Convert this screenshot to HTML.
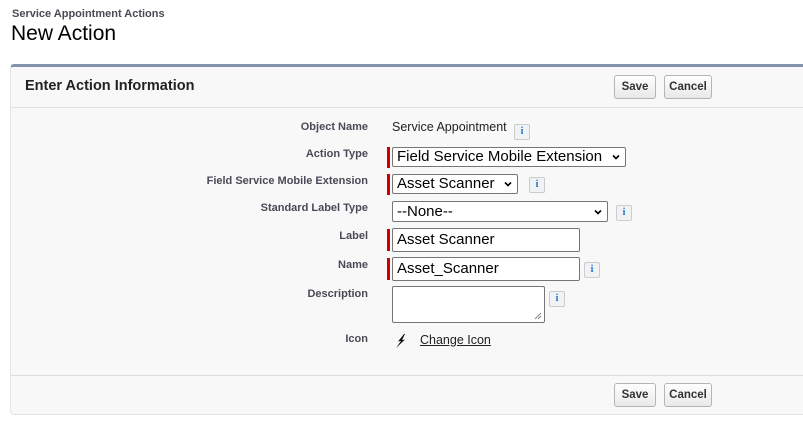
<!DOCTYPE html>
<html><head><style>
*{box-sizing:border-box;margin:0;padding:0}
body{width:803px;height:436px;background:#fff;font-family:"Liberation Sans",Arial,sans-serif;position:relative;overflow:hidden;color:#000}
.a{position:absolute}
.lbl{position:absolute;right:435px;font-size:11px;font-weight:bold;color:#4a4a56;text-align:right;white-space:nowrap}
.req{position:absolute;left:387px;width:3px;background:#c00}
.fld{position:absolute;left:392px;border:1px solid #767676;background:#fff;font-size:15px;color:#000;padding-left:4px;border-radius:2px;white-space:nowrap}
.info{position:absolute;width:16px;height:16px;border:1px solid #ccc;border-radius:2px;background:#f0f2f5;color:#1a73c8;font:bold 10px "Liberation Serif",serif;text-align:center;line-height:14px}
.btn{position:absolute;height:24px;border:1px solid #b5b5b5;border-radius:3px;background:linear-gradient(#fff,#e8e8e8);font-size:11.5px;font-weight:bold;color:#333;text-align:center;line-height:22px}
.chev{position:absolute;right:5px;top:5px;width:8px;height:8px}
</style></head><body>
<div class="a" style="left:12px;top:8px;font-size:11px;font-weight:bold;color:#4a4a56">Service Appointment Actions</div>
<div class="a" style="left:11px;top:22px;font-size:21px;color:#000">New Action</div>
<div class="a" style="left:10px;top:64px;width:800px;height:351px;background:#f8f8f8;border-top:3px solid #8493ab;border-left:1px solid #e4e4e4;border-bottom:1px solid #e0e0e0;border-radius:4px 0 0 4px"></div>
<div class="a" style="left:11px;top:107px;width:792px;height:1px;background:#e2e2e2"></div>
<div class="a" style="left:11px;top:375px;width:792px;height:1px;background:#dcdcdc"></div>
<div class="a" style="left:25px;top:78px;font-size:14.5px;font-weight:bold;color:#222">Enter Action Information</div>
<div class="btn" style="left:614px;top:75px;width:42px">Save</div>
<div class="btn" style="left:664px;top:75px;width:48px">Cancel</div>
<div class="btn" style="left:614px;top:383px;width:42px">Save</div>
<div class="btn" style="left:664px;top:383px;width:48px">Cancel</div>

<div class="lbl" style="top:121px">Object Name</div>
<div class="a" style="left:392px;top:120px;font-size:12.5px;color:#222">Service Appointment</div>
<div class="info" style="left:514px;top:124px">i</div>

<div class="lbl" style="top:148px">Action Type</div>
<div class="req" style="top:147px;height:21px"></div>
<div class="fld" style="top:147px;width:234px;height:20px;line-height:18px">Field Service Mobile Extension<svg class="chev" viewBox="0 0 8 8"><path d="M1 2.5L4 5.5L7 2.5" stroke="#000" stroke-width="1.6" fill="none"/></svg></div>

<div class="lbl" style="top:175px">Field Service Mobile Extension</div>
<div class="req" style="top:174px;height:21px"></div>
<div class="fld" style="top:174px;width:126px;height:20px;line-height:18px">Asset Scanner<svg class="chev" viewBox="0 0 8 8"><path d="M1 2.5L4 5.5L7 2.5" stroke="#000" stroke-width="1.6" fill="none"/></svg></div>
<div class="info" style="left:529px;top:177px">i</div>

<div class="lbl" style="top:202px">Standard Label Type</div>
<div class="fld" style="top:201px;width:216px;height:21px;line-height:19px">--None--<svg class="chev" viewBox="0 0 8 8" style="top:6px"><path d="M1 2.5L4 5.5L7 2.5" stroke="#000" stroke-width="1.6" fill="none"/></svg></div>
<div class="info" style="left:616px;top:205px">i</div>

<div class="lbl" style="top:230px">Label</div>
<div class="req" style="top:229px;height:22px"></div>
<div class="fld" style="top:228px;width:188px;height:24px;line-height:22px">Asset Scanner</div>

<div class="lbl" style="top:259px">Name</div>
<div class="req" style="top:258px;height:22px"></div>
<div class="fld" style="top:257px;width:188px;height:24px;line-height:22px">Asset_Scanner</div>
<div class="info" style="left:584px;top:262px">i</div>

<div class="lbl" style="top:288px">Description</div>
<div class="fld" style="top:286px;width:153px;height:37px"><svg class="a" style="right:2px;bottom:2px" width="8" height="8"><path d="M1 7L7 1M4 7L7 4" stroke="#888" stroke-width="1"/></svg></div>
<div class="info" style="left:549px;top:291px">i</div>

<div class="lbl" style="top:333px">Icon</div>
<svg class="a" style="left:394px;top:333px" width="14" height="16" viewBox="0 0 14 16"><path d="M10 1L4 8.5L7 8L2 15L11 6.5L8 7L11 1Z" fill="#111"/></svg>
<div class="a" style="left:420px;top:333px;font-size:12.5px;color:#222;text-decoration:underline">Change Icon</div>
</body></html>
